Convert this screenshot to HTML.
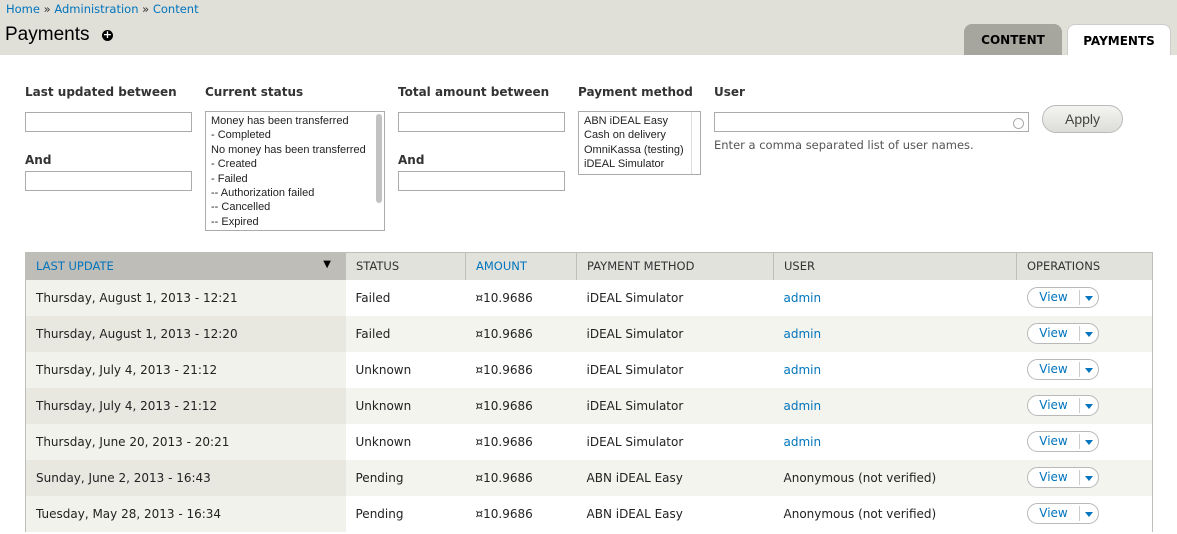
<!DOCTYPE html>
<html><head><meta charset="utf-8"><style>
*{margin:0;padding:0;box-sizing:border-box}
body{width:1177px;height:534px;overflow:hidden;background:#fff;font-family:"DejaVu Sans","Liberation Sans",sans-serif;font-size:12px;color:#333;position:relative}
.a{position:absolute}
#hd{left:0;top:0;width:1177px;height:55px;background:#e0e0d8}
a{color:#0074bd;text-decoration:none}
.bc{left:6px;top:2px;font-size:11.5px;color:#333}
h1{position:absolute;left:5px;top:24px;font-size:19px;font-weight:normal;color:#000;font-family:"Liberation Sans",sans-serif}
.plus{left:102px;top:30px;width:11px;height:11px;border-radius:50%;background:#000;color:#fff;font-size:11px;line-height:10px;text-align:center;font-weight:bold}
.tab{top:24px;height:31px;border-radius:8px 8px 0 0;font-weight:bold;font-size:12px;text-align:center;line-height:33px;color:#000}
.lbl{font-weight:bold;font-size:12px;color:#333}
.in{border:1px solid #ababab;background:#fff;height:20px}
.sel{border:1px solid #ababab;background:#fff;font-family:"Liberation Sans",sans-serif;font-size:11px;line-height:14.4px;padding:2px 5px;color:#222}
table{position:absolute;left:25px;top:252px;border-collapse:collapse;width:1128px;border:1px solid #bebfb9;border-bottom:0}
th{height:27px;background:#e1e2dc;text-align:left;font-weight:normal;font-size:11.5px;padding-left:10px;border-left:1px solid #bebfb9;color:#333}
th.s{background:#bebdb7}
td{height:36px;padding-left:10px;font-size:12px;color:#222}
tr.o td{background:#fff} tr.o td:first-child{background:#f2f2ec}
tr.e td{background:#f3f4ee} tr.e td:first-child{background:#e8e8e0}
.vb{display:inline-block;width:72px;height:21px;border:1px solid #b8b8b8;border-radius:11px;background:#fff;position:relative;vertical-align:middle}
.vb span{position:absolute;left:0;width:52px;text-align:center;color:#0074bd;line-height:19px}
.vb i{position:absolute;left:51px;top:2px;height:15px;border-left:1px solid #ccc}
.vb b{position:absolute;left:57px;top:8px;border:4px solid transparent;border-top:5px solid #0074bd;border-bottom:0}
</style></head><body>
<div id="hd" class="a"></div>
<div class="a bc"><a>Home</a> » <a>Administration</a> » <a>Content</a></div>
<h1>Payments</h1>
<div class="a plus">+</div>
<div class="a tab" style="left:964px;width:98px;background:#a6a69f">CONTENT</div>
<div class="a tab" style="left:1067px;width:104px;background:#fff;border:1px solid #ccc;border-bottom:0">PAYMENTS</div>

<div class="a lbl" style="left:25px;top:85px">Last updated between</div>
<div class="a in" style="left:25px;top:112px;width:167px"></div>
<div class="a lbl" style="left:25px;top:153px">And</div>
<div class="a in" style="left:25px;top:171px;width:167px"></div>

<div class="a lbl" style="left:205px;top:85px">Current status</div>
<div class="a sel" style="left:205px;top:111px;width:180px;height:120px">Money has been transferred<br>- Completed<br>No money has been transferred<br>- Created<br>- Failed<br>-- Authorization failed<br>-- Cancelled<br>-- Expired</div>
<div class="a" style="left:376px;top:114px;width:6px;height:89px;background:#c2c2c2;border-radius:3px"></div>

<div class="a lbl" style="left:398px;top:85px">Total amount between</div>
<div class="a in" style="left:398px;top:112px;width:167px"></div>
<div class="a lbl" style="left:398px;top:153px">And</div>
<div class="a in" style="left:398px;top:171px;width:167px"></div>

<div class="a lbl" style="left:578px;top:85px">Payment method</div>
<div class="a sel" style="left:578px;top:111px;width:123px;height:64px;padding-left:5px">ABN iDEAL Easy<br>Cash on delivery<br>OmniKassa (testing)<br>iDEAL Simulator</div>
<div class="a" style="left:691px;top:112px;height:62px;border-left:1px solid #ddd"></div>

<div class="a lbl" style="left:714px;top:85px">User</div>
<div class="a in" style="left:714px;top:112px;width:315px"></div>
<div class="a" style="left:1013px;top:118px;width:11px;height:11px;border:1px solid #aaa;border-radius:50%"></div>
<div class="a" style="left:714px;top:138px;font-size:11.5px;color:#555">Enter a comma separated list of user names.</div>
<div class="a" style="left:1042px;top:105px;width:81px;height:28px;border:1px solid #bbb;border-radius:14px;background:linear-gradient(#f4f4f2,#dcdcd8);text-align:center;line-height:26px;font-size:14px;color:#444;font-family:'Liberation Sans',sans-serif">Apply</div>

<table>
<tr><th class="s" style="width:320px;border-left:0"><a>LAST UPDATE</a><span style="float:right;margin-right:14px;color:#000;font-size:10px">▼</span></th><th style="width:120px">STATUS</th><th style="width:111px"><a>AMOUNT</a></th><th style="width:197px">PAYMENT METHOD</th><th style="width:243px">USER</th><th>OPERATIONS</th></tr>
<tr class="o"><td>Thursday, August 1, 2013 - 12:21</td><td>Failed</td><td>¤10.9686</td><td>iDEAL Simulator</td><td><a>admin</a></td><td><div class="vb"><span>View</span><i></i><b></b></div></td></tr>
<tr class="e"><td>Thursday, August 1, 2013 - 12:20</td><td>Failed</td><td>¤10.9686</td><td>iDEAL Simulator</td><td><a>admin</a></td><td><div class="vb"><span>View</span><i></i><b></b></div></td></tr>
<tr class="o"><td>Thursday, July 4, 2013 - 21:12</td><td>Unknown</td><td>¤10.9686</td><td>iDEAL Simulator</td><td><a>admin</a></td><td><div class="vb"><span>View</span><i></i><b></b></div></td></tr>
<tr class="e"><td>Thursday, July 4, 2013 - 21:12</td><td>Unknown</td><td>¤10.9686</td><td>iDEAL Simulator</td><td><a>admin</a></td><td><div class="vb"><span>View</span><i></i><b></b></div></td></tr>
<tr class="o"><td>Thursday, June 20, 2013 - 20:21</td><td>Unknown</td><td>¤10.9686</td><td>iDEAL Simulator</td><td><a>admin</a></td><td><div class="vb"><span>View</span><i></i><b></b></div></td></tr>
<tr class="e"><td>Sunday, June 2, 2013 - 16:43</td><td>Pending</td><td>¤10.9686</td><td>ABN iDEAL Easy</td><td>Anonymous (not verified)</td><td><div class="vb"><span>View</span><i></i><b></b></div></td></tr>
<tr class="o"><td>Tuesday, May 28, 2013 - 16:34</td><td>Pending</td><td>¤10.9686</td><td>ABN iDEAL Easy</td><td>Anonymous (not verified)</td><td><div class="vb"><span>View</span><i></i><b></b></div></td></tr>
</table>
</body></html>
